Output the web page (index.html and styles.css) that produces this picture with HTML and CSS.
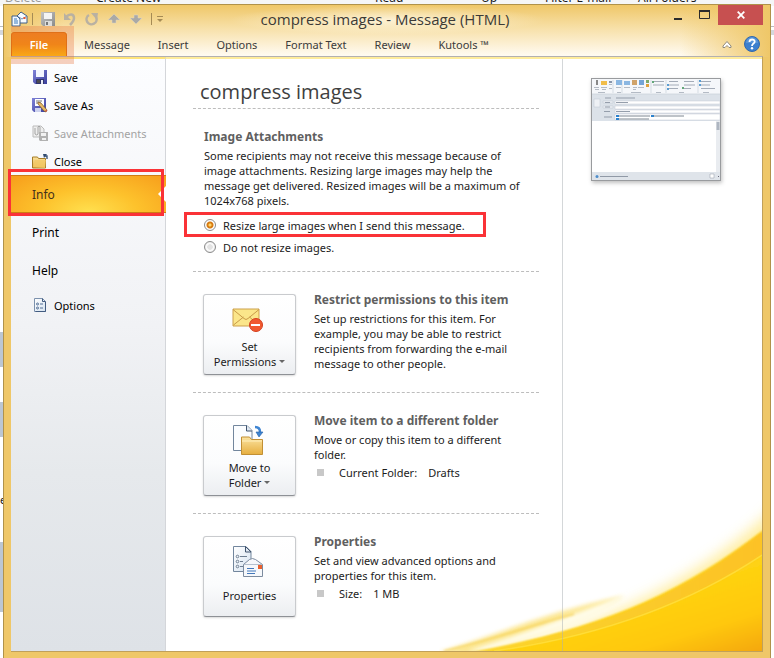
FILE: index.html
```html
<!DOCTYPE html>
<html lang="en">
<head>
<meta charset="utf-8">
<title>compress images - Message (HTML)</title>
<link rel="stylesheet" href="styles.css">
</head>
<body>
<div class="backdrop" aria-hidden="true">
  <div class="backdrop-top"><span class="dim">Delete</span><span>Create New</span><span>Read</span><span>Up</span><span>Filter E-mail</span><span>All Folders</span></div>
  <div class="backdrop-edge">e</div>
</div>
<svg width="0" height="0" class="defs" aria-hidden="true">
  <defs>
    <linearGradient id="blue" x1="0" y1="0" x2="1" y2="1"><stop offset="0" stop-color="#8083d8"/><stop offset="1" stop-color="#3a3f9c"/></linearGradient>
    <linearGradient id="folder" x1="0" y1="0" x2="0" y2="1"><stop offset="0" stop-color="#fbe3a0"/><stop offset="1" stop-color="#e6ae3e"/></linearGradient>
    <linearGradient id="paper" x1="0" y1="0" x2="1" y2="1"><stop offset="0" stop-color="#ffffff"/><stop offset="1" stop-color="#d5e2f0"/></linearGradient>
    <linearGradient id="grey" x1="0" y1="0" x2="1" y2="1"><stop offset="0" stop-color="#c4c4c4"/><stop offset="1" stop-color="#8b8b8b"/></linearGradient>
  </defs>
</svg>
<div class="window">
  <header class="titlebar">
    <div class="quick">
      <svg class="app-icon" width="17" height="16" viewBox="0 0 17 16"><path d="M6 5l4-4 6 4v7H6z" fill="#f7fbff" stroke="#3f5f88"/><path d="M6 5l5 3 5-3" fill="none" stroke="#6f8fb5"/><path d="M12.500 6h2v2h-2z" fill="#e9532a"/><path d="M1 5h5l3 3v7H1z" fill="#f4f9ff" stroke="#3f5f88"/><path d="M3 8h3M3 10h4M3 12h4" stroke="#3978bd"/></svg>
      <i class="rule"></i>
      <button aria-label="Save"><svg width="14" height="14" viewBox="0 0 14 14"><path d="M0 0h14v14H2l-2-2z" fill="url(#grey)"/><path d="M3 1h8v6H3z" fill="#f4f4f4"/><path d="M4 9h7v5H4z" fill="#ddd"/><path d="M5 10h2v3H5z" fill="#777"/></svg></button>
      <button aria-label="Undo"><svg width="14" height="14" viewBox="0 0 14 14"><path d="M3 5C7 1 11 2 11 6c0 3-2 5-4 7" fill="none" stroke="#b9b1a2" stroke-width="2.500"/><path d="M1 1v7h7z" fill="#b9b1a2"/></svg></button>
      <button aria-label="Redo"><svg width="14" height="14" viewBox="0 0 14 14"><path d="M4 3a5 5 0 1 0 7 2" fill="none" stroke="#b9b1a2" stroke-width="2.500"/><path d="M6 1h7l-1 7z" fill="#b9b1a2"/></svg></button>
      <button aria-label="Previous item"><svg width="14" height="14" viewBox="0 0 14 14"><path d="M7 2l6 6H9v3H5V8H1z" fill="#aaa9a6" stroke="#ded6c4" stroke-width=".5"/></svg></button>
      <button aria-label="Next item"><svg width="14" height="14" viewBox="0 0 14 14"><path d="M5 3h4v3h4l-6 6-6-6h4z" fill="#aaa9a6" stroke="#ded6c4" stroke-width=".5"/></svg></button>
      <i class="rule"></i>
      <button class="more" aria-label="Customize toolbar"><svg width="8" height="8" viewBox="0 0 8 8"><path d="M1 1.500h6" stroke="#a58b55"/><path d="M1 4h6L4 7z" fill="#a58b55"/></svg></button>
    </div>
    <h1 class="caption">compress images&nbsp;- Message (HTML)</h1>
    <div class="controls">
      <button aria-label="Minimize"><svg width="10" height="14" viewBox="0 0 10 14"><path d="M1 10h8v2H1z" fill="#2b2b2b"/></svg></button>
      <button aria-label="Maximize"><svg width="11" height="10" viewBox="0 0 11 10"><path d="M.5.500h10v8H.5z" fill="none" stroke="#2b2b2b"/><path d="M0 0h11v2H0z" fill="#2b2b2b"/></svg></button>
      <button class="close" aria-label="Close window"><svg width="8" height="8" viewBox="0 0 8 8"><path d="M.7.700l6.600 6.600M7.300.700L.7 7.300" stroke="#fff" stroke-width="1.800"/></svg></button>
    </div>
  </header>
  <nav class="tabs">
    <button class="file">File</button><button>Message</button><button>Insert</button><button>Options</button><button>Format Text</button><button>Review</button><button>Kutools ™</button>
    <span class="tab-tools">
      <button aria-label="Collapse ribbon"><svg width="10" height="9" viewBox="0 0 10 9"><path d="M1 6l4-4.500L9 6v1.500H7L5 5.500 3 7.500H1z" fill="#fff" stroke="#8f8a7e"/></svg></button>
      <button class="help" aria-label="Help"><svg width="16" height="16" viewBox="0 0 16 16"><circle cx="8" cy="8" r="7.500" fill="#3c7fce" stroke="#3268ad"/><path d="M2 7a6 6 0 0 1 12 0z" fill="#6ba2e0" opacity=".6"/><path d="M5.500 6c0-3.400 5.200-3.200 5.200-.3C10.700 7.700 8 7.500 8 10" fill="none" stroke="#fff" stroke-width="1.800"/><circle cx="8" cy="12.300" r="1.200" fill="#fff"/></svg></button>
    </span>
  </nav>
  <div class="stage">
    <nav class="sidebar">
      <button class="cmd"><svg width="16" height="16" viewBox="0 0 16 16"><path d="M1 1h14v14H3l-2-2z" fill="url(#blue)"/><path d="M4 1h8v7H4z" fill="#f3f6ff"/><path d="M4 10h8v5H4z" fill="#30346e"/><path d="M5 11h3v3H5z" fill="#4b4b50"/><path d="M9 11h2v4H9z" fill="#e8ebf7"/></svg>Save</button>
      <button class="cmd"><svg width="16" height="16" viewBox="0 0 16 16"><path d="M0 1h14v14H2l-2-2z" fill="url(#blue)"/><path d="M3 2h9v7H3z" fill="#fff"/><path d="M4 4h6M4 6h5" stroke="#777"/><path d="M3 11h6v4H3z" fill="#cdd2ef"/><path d="M6 5l3 1 6 7-1 2-2-1-6-7z" fill="#e7bb66" stroke="#7b5528" stroke-width=".7"/><path d="M13 13.500l1 1.500 1.500-2z" fill="#d14b3b"/></svg>Save As</button>
      <button class="cmd" disabled><svg width="16" height="16" viewBox="0 0 16 16"><path d="M1 1h8l3 3v8H1z" fill="#eee" stroke="#bbb"/><path d="M3 3v6q2 2 3 0V2q1-2 2 0v7" fill="none" stroke="#a4a4a4"/><path d="M7 7h9v9H8l-1-1z" fill="#b1b1b1"/><path d="M9 8h5v3H9zM10 13h4v2h-4z" fill="#f2f2f2"/></svg>Save Attachments</button>
      <button class="cmd"><svg width="16" height="16" viewBox="0 0 16 16"><path d="M.5 4h5l1 1.500h7V15H.5z" fill="url(#folder)" stroke="#a57c27"/><path d="M1 14L3 7h11l-1 8z" fill="#f2cb68" opacity=".8"/><path d="M15 6V3h-2" fill="none" stroke="#304b70" stroke-width="1.300"/><path d="M11 1h4l-3 4z" fill="#304b70"/></svg>Close</button>
      <button class="page current">Info<svg class="notch" width="8" height="16" viewBox="0 0 8 16"><path d="M8 0L0 8l8 8z" fill="#fff"/></svg></button>
      <button class="page">Print</button>
      <button class="page">Help</button>
      <button class="cmd options"><svg width="16" height="16" viewBox="0 0 16 16"><path d="M2.500 1.500h8l3 3v10h-11z" fill="url(#paper)" stroke="#7c91ad"/><path d="M10.500 1.500v3h3M13.500 5v9.500h-10" fill="none" stroke="#425b80"/><circle cx="5.500" cy="7" r="1" fill="none" stroke="#536f96"/><circle cx="5.500" cy="11" r="1" fill="none" stroke="#536f96"/><path d="M8 7h3M8 11h3" stroke="#536f96"/></svg>Options</button>
    </nav>
    <main class="info">
      <svg class="swoosh" width="323" height="171" viewBox="0 0 323 171" aria-hidden="true">
        <defs>
          <linearGradient id="gold" x1=".3" y1="0" x2="1" y2="1"><stop offset="0" stop-color="#fbc02d"/><stop offset=".5" stop-color="#fed312"/><stop offset=".75" stop-color="#ffc80c"/><stop offset="1" stop-color="#f2a008"/></linearGradient>
          <linearGradient id="rim" x1="0" y1="0" x2="1" y2="0"><stop offset="0" stop-color="#fcd62e"/><stop offset=".6" stop-color="#fbca2a"/><stop offset="1" stop-color="#fdc226"/></linearGradient>
          <filter id="soft" x="-20%" y="-20%" width="140%" height="140%"><feGaussianBlur stdDeviation="7"/></filter>
          <filter id="fine" x="-20%" y="-20%" width="140%" height="140%"><feGaussianBlur stdDeviation="2"/></filter>
          <filter id="edge" x="-20%" y="-20%" width="140%" height="140%"><feGaussianBlur stdDeviation="1"/></filter>
        </defs>
        <path d="M20 178Q220 140 340 24V190H20z" fill="#ffe98a" opacity=".8" filter="url(#soft)"/>
        <path d="M0 172C50 158 105 132 185 116C145 140 90 158 30 174z" fill="#fbdc62" opacity=".7" filter="url(#fine)"/>
        <path d="M28 171C75 157 125 138 185 115C165 140 85 160 45 171z" fill="#fffce8" filter="url(#fine)"/>
        <path d="M32 173C160 149 240 116 330 46V178H32z" fill="url(#gold)" filter="url(#edge)"/>
        <path d="M34 172C160 150 240 117 323 52V75C245 127 155 157 55 171z" fill="url(#rim)" filter="url(#edge)"/>
        <path d="M55 171C155 157 245 127 323 75" fill="none" stroke="#ffe03f" stroke-width="1.500" opacity=".8"/>
        <path d="M5 171C60 158 100 143 135 134" fill="none" stroke="#f3c93f" stroke-width="1.500" opacity=".7" filter="url(#edge)"/>
      </svg>
      <div class="details">
        <h2 class="subject">compress images</h2>
        <section class="images">
          <h3>Image Attachments</h3>
          <p>Some recipients may not receive this message because of image attachments. Resizing large images may help the message get delivered. Resized images will be a maximum of 1024x768 pixels.</p>
          <label class="choice marked"><input type="radio" name="resize" checked>Resize large images when I send this message.</label>
          <label class="choice"><input type="radio" name="resize">Do not resize images.</label>
        </section>
        <section class="row">
          <button class="tile"><svg width="32" height="32" viewBox="0 0 32 32"><path d="M1 5h26v17H1z" fill="#fbe68a" stroke="#cda04a"/><path d="M1.500 21l10-8M26.500 21l-9-8M1 5.500l11 9q2 2 4 0l11-9" fill="none" stroke="#c99a48"/><circle cx="24" cy="21" r="6.500" fill="#f15a2f" stroke="#d43f20"/><path d="M19 20h9v2h-9z" fill="#fff"/></svg><span>Set<br>Permissions <i class="caret"></i></span></button>
          <div class="text"><h3>Restrict permissions to this item</h3><p>Set up restrictions for this item. For example, you may be able to restrict recipients from forwarding the e-mail message to other people.</p></div>
        </section>
        <section class="row">
          <button class="tile"><svg width="32" height="32" viewBox="0 0 32 32"><path d="M1.500.500H15l5 5v20H1.500z" fill="#fbfdff" stroke="#72869d"/><path d="M14.500.500V6H20" fill="#dfe8f2" stroke="#40546e"/><path d="M23 2q5 0 5 5" fill="none" stroke="#3f85d2" stroke-width="2.500"/><path d="M24 7h7l-4 5z" fill="#3f85d2" stroke="#215ea6" stroke-width=".6"/><path d="M9.500 12h8l2 2.500h11V29.500h-21z" fill="url(#folder)" stroke="#c18f34"/><path d="M10 16h20" stroke="#fff0bc"/></svg><span>Move to<br>Folder <i class="caret"></i></span></button>
          <div class="text"><h3>Move item to a different folder</h3><p>Move or copy this item to a different folder.</p><dl><dt>Current Folder:</dt><dd>Drafts</dd></dl></div>
        </section>
        <section class="row">
          <button class="tile single"><svg width="32" height="32" viewBox="0 0 32 32"><path d="M1.500.500H14l5 5v20H1.500z" fill="url(#paper)" stroke="#72869d"/><path d="M13.500.500V6H19z" fill="#dfe8f2" stroke="#40546e"/><g fill="none" stroke="#6f7f92"><circle cx="5.500" cy="10.500" r="1.300"/><circle cx="5.500" cy="15.500" r="1.300"/><circle cx="5.500" cy="20.500" r="1.300"/><path d="M8 10.500h7M8 15.500h3M8 20.500h3"/></g><path d="M11.500 18.500l6-5q3-2 6 0l7 5v12h-19z" fill="#f6f8fb" stroke="#7c8b9f"/><path d="M12 18.500h18" stroke="#b5c0ce"/><path d="M15 22.500h7M15 25h9M15 27.500h8" stroke="#4378bb"/><path d="M26 19h4v4h-4z" fill="#e9602d"/></svg><span>Properties</span></button>
          <div class="text"><h3>Properties</h3><p>Set and view advanced options and properties for this item.</p><dl><dt>Size:</dt><dd>1 MB</dd></dl></div>
        </section>
      </div>
      <aside class="preview">
        <svg class="thumb" viewBox="0 0 128 101" role="img" aria-label="Message preview">
          <path d="M0 0h128v102H0z" fill="#fff"/><path d="M0 0h128v15H0z" fill="#f5f7fa"/><path d="M0 15h128v27H0z" fill="#dce2e9"/>
          <path d="M0 15h128M21 1v13M30 1v13M59 1v13M74 1v13M106 1v13" stroke="#c9d0d8" stroke-width=".7"/>
          <path d="M4 1h2v5H4z" fill="#888"/><path d="M9 2h6v4H9z" fill="#f1bd4a"/><path d="M17 2h3v2h-3z" fill="#8895aa"/><path d="M24 1h6v5h-6zM32 2h6v4h-6z" fill="#8bb7e2"/><path d="M40 1h5v5h-5z" fill="#d0a36a"/><path d="M47 1h5v5h-5z" fill="#74a4d6"/><path d="M54 1h3v3h-3z" fill="#7cab6d"/><path d="M54 5h3v3h-3z" fill="#e0a13b"/>
          <path d="M2 8.500h5M9 8.500h6M17 5.500h3M17 9.500h3M24 8.500h5M32 8.500h6M41 8.500h4M46 8.500h6M3 10.500h4M10 10.500h4M41 10.500h3M6 13.500h7M25 13.500h4M39 13.500h10M64 13.500h5M87 13.500h5M111 13.500h6" stroke="#b4bbc5"/>
          <path d="M61 2.500h11M61 6h11M77 2.500h9M77 6h10M77 9.500h9M92 2.500h10M92 6h11M92 9.500h7M109 2.500h10M109 6h9M109 9.500h14" stroke="#a4acb8"/>
          <path d="M75 6h2M75 10h2M107 2h2M107 6h2" stroke="#5b9dd2" stroke-width="2"/><path d="M60 3h2M90 9h2" stroke="#62a878" stroke-width="2"/>
          <path d="M2 20h6v8H2zM11 22h10v2H11zM11 27h10v2H11z" fill="#eef1f5" stroke="#bfc7d0" stroke-width=".5"/>
          <path d="M23 22h105v3H23zM23 27h105v3H23zM23 31h105v3H23zM23 35h105v6H23z" fill="#fff" stroke="#c4cbd5" stroke-width=".5"/>
          <path d="M13 19h6M13 23.500h5M13 28h5M12 32.500h6M12 38h8M24 19h19M24 23.500h12M24 32.500h14" stroke="#959eab"/><path d="M25 37h33M60 37h32M25 40h32" stroke="#7e8792"/><path d="M24 37h3M24 40h3M59 37h3" stroke="#2d82cd" stroke-width="2"/>
          <path d="M124 42h4v51h-4z" fill="#e9ecf0"/><path d="M124.500 43h3v8h-3z" fill="#aeb6c1"/><path d="M0 93h128v9H0z" fill="#dfe4ea"/><path d="M8 97.500h28" stroke="#9099a6"/><circle cx="5" cy="97.500" r="1.500" fill="#4f8ecb"/><path d="M118 95h4v4h-4z" fill="#fff" stroke="#9099a6" stroke-width=".5"/><path d="M126 97.500h1" stroke="#667"/>
        </svg>
      </aside>
    </main>
  </div>
</div>
</body>
</html>
```

FILE: styles.css
```css
* { box-sizing: border-box; }
html, body { margin: 0; }
body {
  min-height: 100vh;
  display: flex;
  padding: 4px 3px 0;
  background: #fff;
  color: #1c1c1c;
  font: 11px/15px "Noto Sans", "Open Sans", sans-serif;
}
h1, h2, h3, p, dl, dd { margin: 0; font-weight: normal; }
button { margin: 0; padding: 0; border: 0; background: none; color: inherit; font: inherit; }
svg { display: block; }
.defs { position: absolute; }

.backdrop { position: absolute; inset: 0; overflow: hidden; }
.backdrop-top {
  display: grid;
  grid-template-columns: 91px 279px 106px 64px 93px 1fr;
  height: 16px;
  margin-top: -10px;
  padding-left: 5px;
  font-size: 12px;
  line-height: 15px;
  background: #f5f6f7;
}
.backdrop-top .dim { color: #999; }
.backdrop-edge {
  height: 100%;
  padding-top: 486px;
  background:
    linear-gradient(#bcc6d2, #bcc6d2) 0 326px / 3px 35px no-repeat,
    linear-gradient(#bcc6d2, #bcc6d2) 0 396px / 3px 35px no-repeat,
    linear-gradient(#bcc6d2, #bcc6d2) 0 536px / 3px 70px no-repeat,
    linear-gradient(#b8bcc2, #b8bcc2) 0 20px / 100% 1px no-repeat,
    linear-gradient(#d4d7dc, #d4d7dc) 0 24px / 100% 5px no-repeat,
    #fff;
}

.window {
  position: relative;
  flex: 1;
  min-width: 0;
  display: flex;
  flex-direction: column;
  padding: 0 7px 6px;
  border: 1px solid #b0924a;
  border-bottom: 0;
  background:
    radial-gradient(ellipse at center, rgba(255, 250, 235, .75), rgba(255, 250, 235, 0) 70%) 50% 0 / 320px 30px no-repeat,
    linear-gradient(to right, #efc768, rgba(239, 199, 104, 0) 60px calc(100% - 90px), #efc768) 0 0 / 100% 52px no-repeat,
    linear-gradient(#efc768, #f7dfa5 22px, #fffaf0 50px) 0 0 / 100% 52px no-repeat,
    #efc768;
}

.titlebar { display: grid; grid-template-columns: 1fr auto 1fr; height: 27px; }
.quick { display: flex; align-items: center; gap: 8px; }
.quick .rule { width: 1px; height: 12px; background: #a58b55; }
.quick .app-icon { margin-right: -4px; }
.quick .more { margin-left: -4px; }
.caption { align-self: center; padding-right: 4px; font-family: "Open Sans", sans-serif; font-size: 15px; line-height: 20px; color: #3c3a36; }
.controls { display: flex; justify-content: flex-end; align-items: flex-start; }
.controls button { display: grid; place-items: center; width: 27px; height: 20px; }
.controls .close { width: 45px; background: #c75050; }

.tabs { display: flex; height: 24px; color: #3b3b3b; }
.tabs button { padding: 0 14px; }
.tabs .file {
  position: relative;
  width: 56px;
  margin-right: 3px;
  padding: 0;
  border: 1px solid #e07018;
  border-bottom: 0;
  border-radius: 3px 3px 0 0;
  background: linear-gradient(#ed7d22, #f08519 50%, #f9a818);
  color: #fff;
  font-weight: 600;
}
.tabs .file::after {
  content: "";
  position: absolute;
  inset: -7px -8px -8px -1px;
  border: solid rgba(233, 120, 70, .35);
  border-width: 6px 7px 8px 0;
  pointer-events: none;
  z-index: 2;
}
.tab-tools { display: flex; align-items: center; gap: 12px; margin-left: auto; padding-right: 3px; }
.tabs .tab-tools button { padding: 0; }

.stage {
  flex: 1;
  display: flex;
  border: 1px solid #c0a05a;
  border-width: 1px 1px 1px 0;
  border-top-color: #b3b0b0;
  background: #fff;
}
.sidebar {
  flex: 0 0 155px;
  display: flex;
  flex-direction: column;
  padding-top: 4px;
  border-top: 2px solid #ffe47a;
  border-right: 1px solid #d4d6da;
  background: linear-gradient(#fcfdff, #f1f2f5 45%, #e6e9ec 70%, #dee2e7);
  color: #000;
}
.sidebar button { text-align: left; flex: none; }
.cmd { display: flex; align-items: center; gap: 6px; height: 28px; padding-left: 21px; }
.cmd:disabled { color: #a3a3a3; }
.page { height: 38px; padding-left: 21px; font-size: 12px; }
.page.current {
  position: relative;
  margin-right: -1px;
  border: solid #cf7b13;
  border-width: 1px 0;
  background: radial-gradient(ellipse at 50% 100%, #ffe04f, #fdc22c 45%, #f79d1b);
  color: #45301a;
}
.page.current::after {
  content: "";
  position: absolute;
  inset: -7px 2px -4px -3px;
  border: 3px solid #fa3237;
}
.notch { position: absolute; right: 0; top: 10px; }
.options { margin-top: 2px; }

.info { position: relative; flex: 1; min-width: 0; display: flex; border-top: 2px solid #ffec9c; }
.swoosh { position: absolute; right: 0; bottom: 0; }
.details { position: relative; flex: 0 0 397px; padding: 16px 23px 16px 27px; border-right: 1px solid rgba(170, 175, 180, .5); }
.subject { padding: 2px 7px; font-family: "Open Sans", sans-serif; font-size: 20px; line-height: 29px; color: #3f3f3f; }
.images, .row { border-top: 1px dashed #bdbdbd; }
.images { padding: 19px 11px 13px; }
h3 { margin-bottom: 2px; font-size: 12px; line-height: 18px; font-weight: bold; color: #5f5f5f; }
.choice { display: flex; align-items: center; gap: 7px; height: 22px; }
.choice input {
  appearance: none;
  width: 12px;
  height: 12px;
  margin: 0;
  border: 1px solid #8b8b8b;
  border-radius: 50%;
  background: radial-gradient(#e3e3e3 35%, #fff 45%, #d5d5d5);
}
.choice input:checked { background: radial-gradient(circle, #ffd76a 0 1px, #d77b13 2px 3px, #fff 4px); }
.marked { position: relative; margin-top: 6px; }
.marked::after { content: ""; position: absolute; inset: -2px 42px -1px -20px; border: 3px solid #fa3237; }

.row { display: flex; align-items: flex-start; gap: 18px; min-height: 121px; padding: 22px 0 0 10px; }
.row:last-child { min-height: 0; }
.tile {
  flex: none;
  display: flex;
  flex-direction: column;
  align-items: center;
  gap: 3px;
  width: 93px;
  height: 81px;
  padding-top: 9px;
  border: 1px solid #c9cbce;
  border-bottom-color: #8e9196;
  border-radius: 3px;
  background: linear-gradient(#fff, #fbfcfd 60%, #eceef1);
  box-shadow: 0 1px 2px rgba(0, 0, 0, .15);
}
.tile svg { margin-left: -3px; }
.tile.single { gap: 10px; }
.caret { display: inline-block; border: 3px solid transparent; border-top-color: #666; border-bottom: 0; vertical-align: 3px; }
.text { min-width: 0; margin-top: -3px; padding-right: 12px; }
dl { display: flex; align-items: center; gap: 11px; margin-top: 3px; }
dl::before { content: ""; width: 7px; height: 7px; margin: 0 4px 0 3px; background: #c8c8c8; }

.preview { flex: 1; padding: 19px 28px; }
.thumb { width: 100%; max-width: 130px; border: 1px solid #999b9e; box-shadow: 1px 2px 4px rgba(0, 0, 0, .25); }
```
